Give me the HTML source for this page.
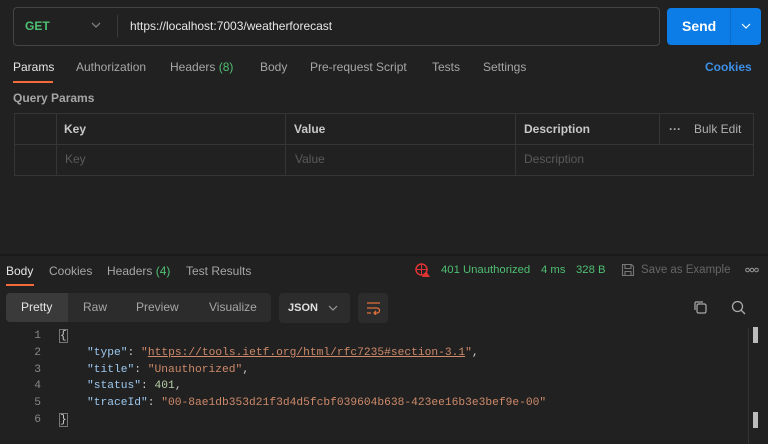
<!DOCTYPE html>
<html><head><meta charset="utf-8"><style>
*{margin:0;padding:0;box-sizing:border-box}
body{width:768px;height:444px;background:#212121;font-family:"Liberation Sans",sans-serif;font-size:12px;color:#a6a6a6;position:relative;overflow:hidden}
.a{position:absolute;white-space:nowrap}
.mono{font-family:"Liberation Mono",monospace;font-size:11.25px}
.str{color:#ce8a6a}
.key{color:#9cc8f0}
.num{color:#b5cea8}
</style></head><body>
<div class="a" style="left:13px;top:7px;width:647px;height:39px;border:1px solid #444;border-radius:4px;background:#212121"></div>
<div class="a" style="left:25px;top:19px;color:#4fbf73;font-weight:bold;font-size:12px">GET</div>
<svg class="a" style="left:91px;top:21px" width="10" height="8"><path d="M1 2l4 4 4-4" stroke="#888" fill="none" stroke-width="1.2"/></svg>
<div class="a" style="left:117px;top:15px;width:1px;height:22px;background:#3a3a3a"></div>
<div class="a" style="left:130px;top:19px;color:#e6e6e6;font-size:12px">https://localhost:7003/weatherforecast</div>
<div class="a" style="left:667px;top:8px;width:94px;height:37px;background:#0c7ce6;border-radius:4px"></div>
<div class="a" style="left:730px;top:8px;width:1px;height:37px;background:#0a6ccc"></div>
<div class="a" style="left:682px;top:18px;color:#fff;font-weight:bold;font-size:14px">Send</div>
<svg class="a" style="left:741px;top:22px" width="10" height="8"><path d="M1 2l4 4 4-4" stroke="#fff" fill="none" stroke-width="1.2"/></svg>

<div class="a" style="left:13px;top:60px;color:#e6e6e6">Params</div>
<div class="a" style="left:13px;top:81px;width:40px;height:2px;background:#f26b3a"></div>
<div class="a" style="left:76px;top:60px">Authorization</div>
<div class="a" style="left:170px;top:60px">Headers <span style="color:#4fbf73">(8)</span></div>
<div class="a" style="left:260px;top:60px">Body</div>
<div class="a" style="left:310px;top:60px">Pre-request Script</div>
<div class="a" style="left:432px;top:60px">Tests</div>
<div class="a" style="left:483px;top:60px">Settings</div>
<div class="a" style="left:705px;top:60px;color:#3d8fe6;font-weight:bold">Cookies</div>
<div class="a" style="left:13px;top:91px;color:#a6a6a6;font-weight:bold">Query Params</div>

<div class="a" style="left:14px;top:113px;width:740px;height:63px;border:1px solid #353535"></div>
<div class="a" style="left:14px;top:144px;width:740px;height:1px;background:#353535"></div>
<div class="a" style="left:56px;top:113px;width:1px;height:63px;background:#353535"></div>
<div class="a" style="left:285px;top:113px;width:1px;height:63px;background:#353535"></div>
<div class="a" style="left:515px;top:113px;width:1px;height:63px;background:#353535"></div>
<div class="a" style="left:659px;top:113px;width:1px;height:32px;background:#353535"></div>
<div class="a" style="left:64px;top:122px;color:#c8c8c8;font-weight:bold">Key</div>
<div class="a" style="left:294px;top:122px;color:#c8c8c8;font-weight:bold">Value</div>
<div class="a" style="left:524px;top:122px;color:#c8c8c8;font-weight:bold">Description</div>
<div class="a" style="left:669px;top:122px;color:#aaa;font-weight:bold">···</div>
<div class="a" style="left:694px;top:122px;color:#b0b0b0">Bulk Edit</div>
<div class="a" style="left:65px;top:152px;color:#5a5a5a">Key</div>
<div class="a" style="left:295px;top:152px;color:#5a5a5a">Value</div>
<div class="a" style="left:524px;top:152px;color:#5a5a5a">Description</div>

<div class="a" style="left:0;top:254px;width:768px;height:2px;background:#1a1a1a"></div>
<div class="a" style="left:6px;top:264px;color:#e6e6e6">Body</div>
<div class="a" style="left:6px;top:284px;width:28px;height:2px;background:#f26b3a"></div>
<div class="a" style="left:49px;top:264px">Cookies</div>
<div class="a" style="left:107px;top:264px">Headers <span style="color:#4fbf73">(4)</span></div>
<div class="a" style="left:186px;top:264px">Test Results</div>
<svg class="a" style="left:415px;top:263px" width="16" height="15"><circle cx="6.5" cy="6.5" r="5.5" fill="none" stroke="#d33" stroke-width="1.5"/><path d="M1 6.5h11M6.5 1v11" stroke="#d33" stroke-width="1"/><path d="M11 8l4 6h-8z" fill="#d33"/></svg>
<div class="a" style="left:441px;top:264px;color:#4fbf73;font-size:11.3px">401 Unauthorized</div>
<div class="a" style="left:541px;top:264px;color:#4fbf73;font-size:11.3px">4 ms</div>
<div class="a" style="left:576px;top:264px;color:#4fbf73;font-size:11.3px">328 B</div>
<svg class="a" style="left:621px;top:263px" width="14" height="14"><path d="M1.5 1.5h9l2 2v9h-11z M4 1.5v4h6v-4 M4 12.5v-4h6v4" fill="none" stroke="#777" stroke-width="1.1"/></svg>
<div class="a" style="left:641px;top:264px;color:#666;font-size:11.5px">Save as Example</div>
<svg class="a" style="left:745px;top:267px" width="14" height="6"><circle cx="2.5" cy="3" r="1.8" fill="none" stroke="#999"/><circle cx="7" cy="3" r="1.8" fill="none" stroke="#999"/><circle cx="11.5" cy="3" r="1.8" fill="none" stroke="#999"/></svg>

<div class="a" style="left:6px;top:293px;width:265px;height:29px;background:#2c2c2c;border-radius:4px"></div>
<div class="a" style="left:6px;top:293px;width:62px;height:29px;background:#3a3a3a;border-radius:4px 0 0 4px"></div>
<div class="a" style="left:21px;top:300px;color:#e6e6e6">Pretty</div>
<div class="a" style="left:83px;top:300px">Raw</div>
<div class="a" style="left:136px;top:300px">Preview</div>
<div class="a" style="left:209px;top:300px">Visualize</div>
<div class="a" style="left:279px;top:293px;width:71px;height:30px;background:#2c2c2c;border-radius:4px"></div>
<div class="a" style="left:288px;top:302px;color:#e0e0e0;font-weight:bold;font-size:11px">JSON</div>
<svg class="a" style="left:328px;top:304px" width="10" height="8"><path d="M1 2l4 4 4-4" stroke="#999" fill="none" stroke-width="1.2"/></svg>
<div class="a" style="left:358px;top:293px;width:30px;height:30px;background:#2c2c2c;border-radius:4px"></div>
<svg class="a" style="left:366px;top:301px" width="15" height="14"><path d="M1 2h13M1 7h10a2.5 2.5 0 0 1 0 5H8M10 10l-2 2 2 2M1 12h4" fill="none" stroke="#e0703a" stroke-width="1.3"/></svg>
<svg class="a" style="left:693px;top:300px" width="15" height="15"><rect x="4" y="4" width="9" height="9" rx="1.5" fill="none" stroke="#aaa" stroke-width="1.2"/><path d="M2 10V3a1 1 0 0 1 1-1h7" fill="none" stroke="#aaa" stroke-width="1.2"/></svg>
<svg class="a" style="left:731px;top:300px" width="15" height="15"><circle cx="6.5" cy="6.5" r="5" fill="none" stroke="#aaa" stroke-width="1.3"/><path d="M10 10l4 4" stroke="#aaa" stroke-width="1.3"/></svg>

<div class="a" style="left:748px;top:328px;width:1px;height:116px;background:#333"></div>
<div class="a" style="left:753px;top:327px;width:5px;height:16px;background:#bbb"></div>
<div class="a" style="left:753px;top:412px;width:5px;height:16px;background:#bbb"></div>

<div class="a mono" style="left:33px;top:328px;color:#888;line-height:16.8px;text-align:right;width:8px">1<br>2<br>3<br>4<br>5<br>6</div>
<div class="a mono" style="left:60px;top:328px;color:#ccc;line-height:16.8px">
<span style="outline:1px solid #777">{</span><br>
&nbsp;&nbsp;&nbsp;&nbsp;<span class="key">"type"</span>: <span class="str">"<span style="text-decoration:underline">https://tools.ietf.org/html/rfc7235#section-3.1</span>"</span>,<br>
&nbsp;&nbsp;&nbsp;&nbsp;<span class="key">"title"</span>: <span class="str">"Unauthorized"</span>,<br>
&nbsp;&nbsp;&nbsp;&nbsp;<span class="key">"status"</span>: <span class="num">401</span>,<br>
&nbsp;&nbsp;&nbsp;&nbsp;<span class="key">"traceId"</span>: <span class="str">"00-8ae1db353d21f3d4d5fcbf039604b638-423ee16b3e3bef9e-00"</span><br>
<span style="outline:1px solid #777">}</span></div>
</body></html>
